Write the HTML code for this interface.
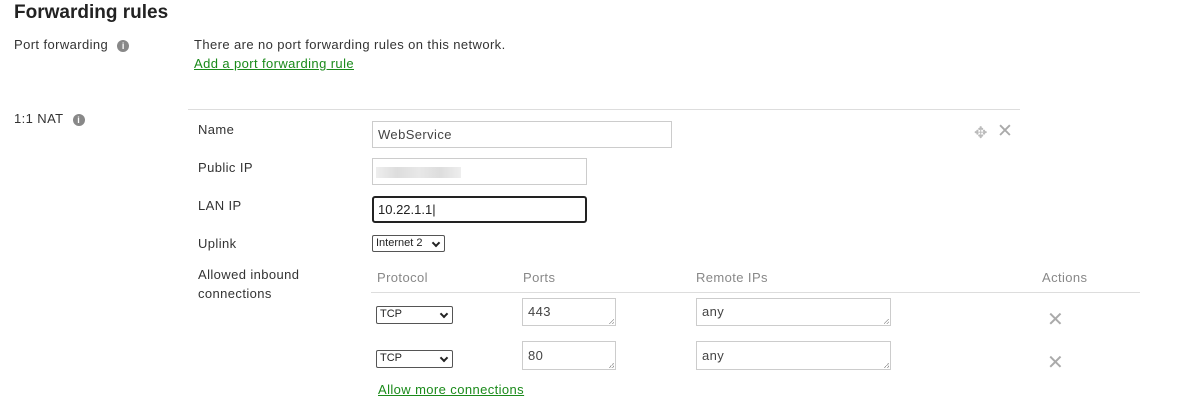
<!DOCTYPE html>
<html><head><style>
body{margin:0;width:1193px;height:415px;background:#fff;font-family:"Liberation Sans",sans-serif;color:#333;font-size:13px;position:relative;overflow:hidden;letter-spacing:0.4px}
.a{position:absolute;white-space:nowrap}
h1{position:absolute;left:14px;top:2px;margin:0;font-size:19px;font-weight:bold;color:#222;letter-spacing:0}
.info{display:inline-block;width:12px;height:12px;border-radius:50%;background:#888;color:#fff;font-size:9px;font-weight:bold;text-align:center;line-height:12px;vertical-align:0px;margin-left:9px;letter-spacing:0}
a{color:#1a8a1a;text-decoration:underline}
.in{position:absolute;border:1px solid #ccc;box-sizing:border-box;padding:0 5px;font-size:13px;color:#444;background:#fff}
.sel{position:absolute;border:1px solid #555;border-radius:2px;box-sizing:border-box;font-size:11px;padding:1px 3px;color:#222;background:#fff;letter-spacing:0}
.sel:after{content:"";position:absolute;right:5px;top:4px;width:4px;height:4px;border-right:2px solid #222;border-bottom:2px solid #222;transform:rotate(45deg)}
.gh{position:absolute;color:#888;font-size:13px}
.x{position:absolute;color:#aaa;font-size:20px;line-height:20px}
.rz{position:absolute;right:1px;bottom:1px;width:5px;height:5px;background:linear-gradient(135deg,transparent 45%,#999 45%,#999 55%,transparent 55%,transparent 75%,#999 75%,#999 85%,transparent 85%)}
</style></head><body>
<h1>Forwarding rules</h1>
<div class="a" style="left:14px;top:37px">Port forwarding<span class="info">i</span></div>
<div class="a" style="left:194px;top:37px">There are no port forwarding rules on this network.</div>
<div class="a" style="left:194px;top:56px"><a>Add a port forwarding rule</a></div>
<div class="a" style="left:14px;top:111px">1:1 NAT<span class="info">i</span></div>
<div style="position:absolute;left:188px;top:109px;width:832px;height:1px;background:#ddd"></div>
<div class="a" style="left:198px;top:122px">Name</div>
<div class="in" style="left:372px;top:121px;width:300px;height:27px;line-height:25px">WebService</div>
<div class="x" style="left:997px;top:122px;font-size:19px">✕</div>
<div class="a" style="left:974px;top:123px;color:#bbb;font-size:16px">✥</div>
<div class="a" style="left:198px;top:160px">Public IP</div>
<div class="in" style="left:372px;top:158px;width:215px;height:27px"><div style="position:absolute;left:3px;top:8px;width:85px;height:11px;background:linear-gradient(90deg,#eee,#ddd,#e8e8e8,#ddd,#eee)"></div></div>
<div class="a" style="left:198px;top:198px">LAN IP</div>
<div class="in" style="left:372px;top:196px;width:215px;height:27px;border:2px solid #222;border-radius:3px;line-height:23px;padding-left:4px;color:#222;letter-spacing:0">10.22.1.1|</div>
<div class="a" style="left:198px;top:236px">Uplink</div>
<div class="sel" style="left:372px;top:235px;width:73px;height:17px;padding-right:14px">Internet 2</div>
<div class="a" style="left:198px;top:265px;line-height:19px">Allowed inbound<br>connections</div>
<div class="gh" style="left:377px;top:270px">Protocol</div>
<div class="gh" style="left:523px;top:270px">Ports</div>
<div class="gh" style="left:696px;top:270px">Remote IPs</div>
<div class="gh" style="left:1042px;top:270px">Actions</div>
<div style="position:absolute;left:371px;top:292px;width:769px;height:1px;background:#ddd"></div>
<div class="sel" style="left:376px;top:306px;width:77px;height:18px">TCP</div>
<div class="in" style="left:522px;top:298px;width:94px;height:28px;line-height:26px">443<div class="rz"></div></div>
<div class="in" style="left:696px;top:298px;width:195px;height:28px;line-height:26px">any<div class="rz"></div></div>
<div class="x" style="left:1047px;top:310px">✕</div>
<div class="sel" style="left:376px;top:350px;width:77px;height:18px">TCP</div>
<div class="in" style="left:522px;top:341px;width:94px;height:29px;line-height:27px">80<div class="rz"></div></div>
<div class="in" style="left:696px;top:341px;width:195px;height:29px;line-height:27px">any<div class="rz"></div></div>
<div class="x" style="left:1047px;top:353px">✕</div>
<div class="a" style="left:378px;top:382px"><a>Allow more connections</a></div>
</body></html>
